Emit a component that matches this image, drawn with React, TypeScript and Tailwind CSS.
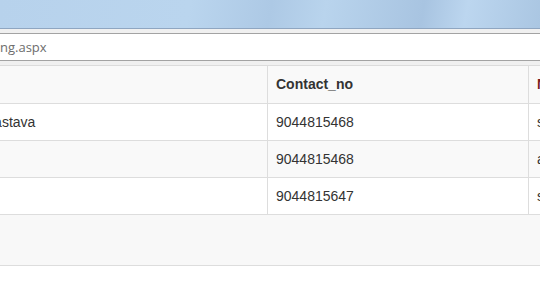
import React from "react";

const rows = [
  { name: "Srivastava", contact: "9044815468", next: "s", bg: "bg-white" },
  { name: "", contact: "9044815468", next: "a", bg: "bg-[#f9f9f9]" },
  { name: "", contact: "9044815647", next: "s", bg: "bg-white" },
];

export default function App() {
  return (
    <div className="w-[540px] h-[283px] overflow-hidden bg-white font-['Liberation_Sans',Arial,sans-serif] text-[14px] text-[#333]">
      <div className="h-[29px] border-b border-[#8fa6c1] bg-[linear-gradient(100deg,#b7d2ec_0%,#bad5ee_35%,#adc9e5_50%,#b9d4ed_60%,#a8c4e1_78%,#bcd6ef_86%,#aac6e2_100%)]" />
      <div className="h-[4px] bg-[#f0f0f0]" />
      <div className="h-[28px] border-y border-[#a3a3a3] bg-white flex items-center">
        <span className="font-['Open_Sans',sans-serif] text-[13px] text-[#6d6d6d] leading-none">ng.aspx</span>
      </div>
      <div className="h-[5px] bg-[#f0f0f0] border-b border-[#dcdcdc]" />
      <div className="ml-[-38px] w-[700px]">
        <div className="grid grid-cols-[306px_261px_133px] h-[38px] bg-[#f9f9f9] border-b border-[#dddddd] font-bold">
          <div className="border-r border-[#dddddd] px-2 flex items-center" />
          <div className="border-r border-[#dddddd] px-2 flex items-center">Contact_no</div>
          <div className="px-2 flex items-center text-[#7a1e1e]">Name</div>
        </div>
        {rows.map((r, i) => (
          <div
            key={i}
            className={`grid grid-cols-[306px_261px_133px] h-[37px] border-b border-[#dddddd] ${r.bg}`}
          >
            <div className="border-r border-[#dddddd] px-2 flex items-center">{r.name}</div>
            <div className="border-r border-[#dddddd] px-2 flex items-center">{r.contact}</div>
            <div className="px-2 flex items-center">{r.next}</div>
          </div>
        ))}
        <div className="h-[51px] bg-[#f8f8f8] border-b border-[#dddddd]" />
      </div>
    </div>
  );
}
